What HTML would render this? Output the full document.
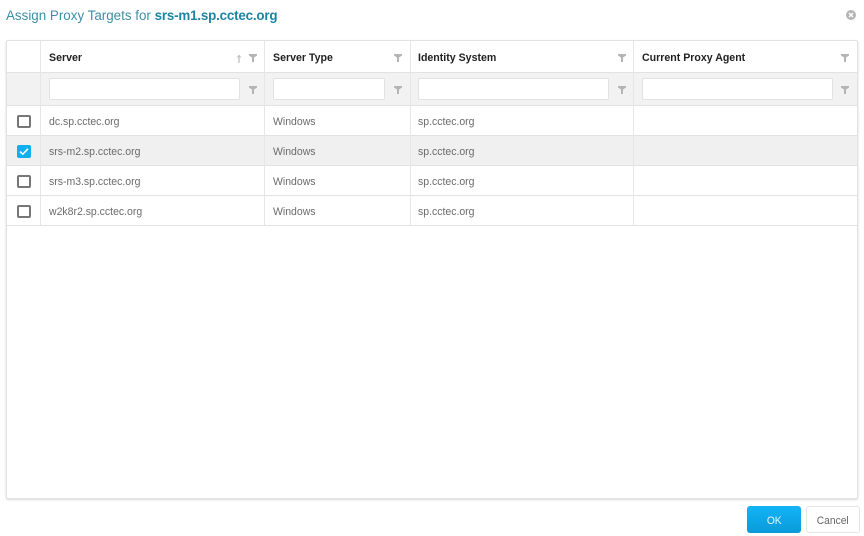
<!DOCTYPE html>
<html><head><meta charset="utf-8"><style>
html,body{margin:0;padding:0;background:#fff}
body{width:864px;height:536px;position:relative;overflow:hidden;font-family:"Liberation Sans",sans-serif}
.a{position:absolute}
.t{position:absolute;white-space:nowrap;font-size:11.4px;line-height:16px;color:#6b6b6b;transform:scaleX(.92);transform-origin:0 0}
.h{position:absolute;white-space:nowrap;font-size:11.4px;line-height:16px;color:#222;font-weight:bold;top:50px;transform:scaleX(.93);transform-origin:0 0}
.i{position:absolute;width:189px;height:20px;background:#fff;border:1px solid #e2e2e2;border-radius:2px;top:78px}
.v{position:absolute;width:1px;background:#e6e6e6;top:41px;height:184px}
.r{position:absolute;left:7px;width:850px;height:1px;background:#e2e2e2}
.c{position:absolute;left:17px;width:10px;height:9px;border:2px solid #777;border-radius:2px;background:#fff}
svg.f{position:absolute;width:8px;height:8px}
.b{display:inline-block;font-size:11.4px;transform:scaleX(.9)}
</style></head><body>
<div class="a" style="left:6px;top:8px;font-size:13.4px;line-height:16px;color:#3d8fa8;white-space:nowrap">Assign Proxy Targets for <b style="color:#1b86a3;letter-spacing:-.2px">srs-m1.sp.cctec.org</b></div>
<svg class="a" style="left:846px;top:10px" width="10" height="10" viewBox="0 0 10 10"><circle cx="5" cy="5" r="5" fill="#b5b5b5"/><path d="M3 3l4 4M7 3l-4 4" stroke="#fff" stroke-width="1.4"/></svg>

<div class="a" style="left:6px;top:40px;width:850px;height:457px;border:1px solid #e2e2e2;border-radius:2px;box-shadow:0 1px 2px rgba(0,0,0,.15);background:#fff"></div>
<div class="a" style="left:7px;top:73px;width:850px;height:32px;background:#f2f2f2"></div>
<div class="a" style="left:7px;top:136px;width:850px;height:29px;background:#f0f0f0"></div>
<div class="r" style="top:72px"></div><div class="r" style="top:105px"></div><div class="r" style="top:135px"></div><div class="r" style="top:165px"></div><div class="r" style="top:195px"></div><div class="r" style="top:225px"></div>
<div class="v" style="left:40px"></div><div class="v" style="left:264px"></div><div class="v" style="left:410px"></div><div class="v" style="left:633px"></div>

<div class="h" style="left:49px">Server</div>
<div class="h" style="left:273px">Server Type</div>
<div class="h" style="left:418px">Identity System</div>
<div class="h" style="left:642px">Current Proxy Agent</div>

<svg class="a" style="left:236px;top:54px" width="6" height="9" viewBox="0 0 6 9"><path d="M3 0.5L0.6 3.5h1.7V9h1.4V3.5h1.7z" fill="#c4c4c4"/></svg>
<svg class="f" style="left:249px;top:54px" viewBox="0 0 8 8"><path d="M0 0h8v1.5L5 3.5V8H3V3.5L0 1.5z" fill="#b4b4b4"/></svg>
<svg class="f" style="left:394px;top:54px" viewBox="0 0 8 8"><path d="M0 0h8v1.5L5 3.5V8H3V3.5L0 1.5z" fill="#b4b4b4"/></svg>
<svg class="f" style="left:618px;top:54px" viewBox="0 0 8 8"><path d="M0 0h8v1.5L5 3.5V8H3V3.5L0 1.5z" fill="#b4b4b4"/></svg>
<svg class="f" style="left:841px;top:54px" viewBox="0 0 8 8"><path d="M0 0h8v1.5L5 3.5V8H3V3.5L0 1.5z" fill="#b4b4b4"/></svg>

<div class="i" style="left:49px"></div>
<div class="i" style="left:273px;width:110px"></div>
<div class="i" style="left:418px"></div>
<div class="i" style="left:642px"></div>
<svg class="f" style="left:249px;top:86px" viewBox="0 0 8 8"><path d="M0 0h8v1.5L5 3.5V8H3V3.5L0 1.5z" fill="#b4b4b4"/></svg>
<svg class="f" style="left:394px;top:86px" viewBox="0 0 8 8"><path d="M0 0h8v1.5L5 3.5V8H3V3.5L0 1.5z" fill="#b4b4b4"/></svg>
<svg class="f" style="left:618px;top:86px" viewBox="0 0 8 8"><path d="M0 0h8v1.5L5 3.5V8H3V3.5L0 1.5z" fill="#b4b4b4"/></svg>
<svg class="f" style="left:841px;top:86px" viewBox="0 0 8 8"><path d="M0 0h8v1.5L5 3.5V8H3V3.5L0 1.5z" fill="#b4b4b4"/></svg>

<div class="c" style="top:115px"></div>
<div class="a" style="left:17px;top:145px;width:14px;height:13px;background:#11aef0;border-radius:2px"><svg width="14" height="13" viewBox="0 0 14 13" style="display:block"><path d="M3 6.6l2.8 2.6L11 3.8" fill="none" stroke="#fff" stroke-width="1.5"/></svg></div>
<div class="c" style="top:175px"></div>
<div class="c" style="top:205px"></div>

<div class="t" style="left:49px;top:114px">dc.sp.cctec.org</div><div class="t" style="left:273px;top:114px">Windows</div><div class="t" style="left:418px;top:114px">sp.cctec.org</div>
<div class="t" style="left:49px;top:144px">srs-m2.sp.cctec.org</div><div class="t" style="left:273px;top:144px">Windows</div><div class="t" style="left:418px;top:144px">sp.cctec.org</div>
<div class="t" style="left:49px;top:174px">srs-m3.sp.cctec.org</div><div class="t" style="left:273px;top:174px">Windows</div><div class="t" style="left:418px;top:174px">sp.cctec.org</div>
<div class="t" style="left:49px;top:204px">w2k8r2.sp.cctec.org</div><div class="t" style="left:273px;top:204px">Windows</div><div class="t" style="left:418px;top:204px">sp.cctec.org</div>

<div class="a" style="left:747px;top:506px;width:54px;height:27px;border-radius:3px;background:linear-gradient(#12b5f7,#0a9ad8);color:#e8f7fd;line-height:28px;text-align:center"><span class="b">OK</span></div>
<div class="a" style="left:806px;top:506px;width:52px;height:25px;border:1px solid #e6e6e6;border-radius:3px;background:#fff;color:#666;line-height:26px;text-align:center"><span class="b">Cancel</span></div>
</body></html>
